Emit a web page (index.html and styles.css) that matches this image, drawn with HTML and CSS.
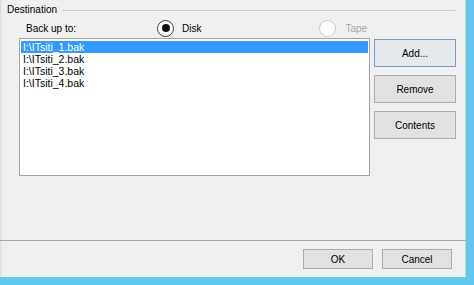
FILE: index.html
```html
<!DOCTYPE html>
<html>
<head>
<meta charset="utf-8">
<link rel="stylesheet" href="styles.css">
</head>
<body>
<div class="window">
  <div class="group-head">
    <span class="legend">Destination</span>
    <span class="rule"></span>
  </div>
  <div class="radio-row">
    <span class="label">Back up to:</span>
    <span class="radio checked"><span class="dot"></span></span>
    <span class="rlabel">Disk</span>
    <span class="radio disabled"></span>
    <span class="rlabel disabled-text">Tape</span>
  </div>
  <div class="content">
    <div class="listbox">
      <div class="item selected">I:\ITsiti_1.bak</div>
      <div class="item">I:\ITsiti_2.bak</div>
      <div class="item">I:\ITsiti_3.bak</div>
      <div class="item">I:\ITsiti_4.bak</div>
    </div>
    <div class="side-buttons">
      <button class="btn btn-side focused">Add...</button>
      <button class="btn btn-side">Remove</button>
      <button class="btn btn-side">Contents</button>
    </div>
  </div>
  <div class="footer">
    <button class="btn btn-foot">OK</button>
    <button class="btn btn-foot">Cancel</button>
  </div>
</div>
</body>
</html>
```
FILE: styles.css
```css
html, body {
  margin: 0;
  padding: 0;
}
body {
  width: 474px;
  height: 285px;
  background: #62c7ef;
  font-family: "Liberation Sans", Arial, sans-serif;
  font-size: 10px;
  color: #000;
  overflow: hidden;
}
.window {
  width: 466px;
  height: 277px;
  background: #f0f0f0;
  box-shadow: inset 2px 0 2px -1px #d8d8d8, inset -1px 0 0 #d0d0d0;
  display: flex;
  flex-direction: column;
}
.group-head {
  display: flex;
  align-items: center;
  height: 12px;
  margin-top: 4px;
  margin-left: 7px;
  margin-right: 11px;
}
.legend {
  line-height: 12px;
  padding-right: 5px;
}
.rule {
  flex: 1;
  height: 0;
  border-top: 1px solid #cfcfcf;
}
.radio-row {
  display: flex;
  align-items: center;
  height: 18px;
  margin-top: 3px;
}
.label {
  margin-left: 26px;
  width: 131px;
}
.radio {
  width: 15px;
  height: 15px;
  border-radius: 50%;
  border: 1px solid #3a3a3a;
  background: #fff;
  display: flex;
  align-items: center;
  justify-content: center;
  box-sizing: content-box;
}
.radio.disabled {
  border-color: #c9c9c9;
  margin-left: 118px;
}
.dot {
  width: 8px;
  height: 8px;
  border-radius: 50%;
  background: #111;
}
.rlabel {
  margin-left: 8px;
}
.disabled-text {
  color: #a6a6a6;
  margin-left: 9px;
}
.content {
  display: flex;
  margin-top: 1px;
  margin-left: 19px;
}
.listbox {
  width: 347px;
  height: 134px;
  background: #fff;
  border: 1px solid #a3a3a3;
  padding: 2px 1px 0 1px;
  box-sizing: content-box;
}
.item {
  height: 12px;
  line-height: 12px;
  font-size: 10.5px;
  padding-left: 2px;
}
.item.selected {
  background: #3399ff;
  color: #fff;
}
.side-buttons {
  display: flex;
  flex-direction: column;
  gap: 8px;
  margin-left: 4px;
  margin-top: 1px;
}
.btn {
  font-family: "Liberation Sans", Arial, sans-serif;
  font-size: 10px;
  color: #000;
  background: #e1e1e1;
  border: 1px solid #adadad;
  padding: 0;
  margin: 0;
}
.btn-side {
  width: 82px;
  height: 28px;
}
.btn.focused {
  border-color: #7a9cc4;
  background: #e5e8ec;
}
.footer {
  margin-top: auto;
  height: 37px;
  border-top: 1px solid #a9a9a9;
  display: flex;
  justify-content: flex-end;
  align-items: flex-start;
  gap: 9px;
  padding-top: 8px;
  padding-right: 14px;
  box-sizing: border-box;
}
.btn-foot {
  width: 70px;
  height: 20px;
}
```
